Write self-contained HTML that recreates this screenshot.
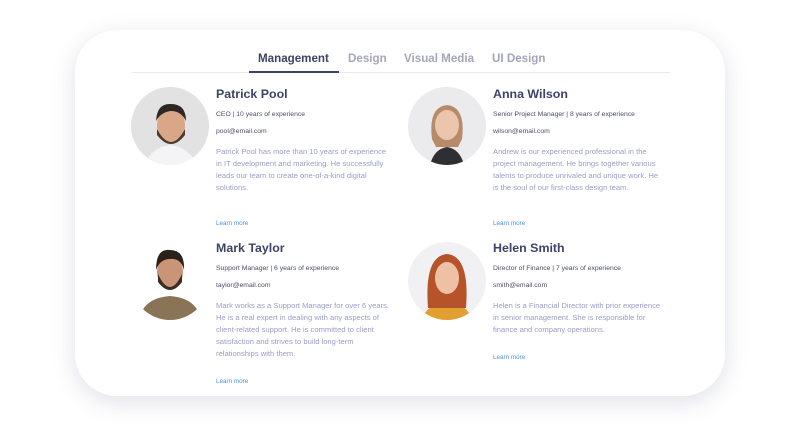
<!DOCTYPE html>
<html><head><meta charset="utf-8"><style>
*{margin:0;padding:0;box-sizing:border-box}
body{width:800px;height:428px;background:#fff;font-family:"Liberation Sans",sans-serif;position:relative;overflow:hidden}
.card{position:absolute;left:75px;top:30px;width:650px;height:366px;border-radius:42px;background:#fff;box-shadow:0 6px 24px rgba(60,70,110,.16)}
.tab{position:absolute;top:52px;font-size:11.6px;font-weight:bold;color:#a3a6bb;white-space:nowrap}
.a{position:absolute;border-radius:50%;overflow:hidden;width:78px;height:78px}
.n{position:absolute;font-size:12.4px;font-weight:bold;color:#3d4366;white-space:nowrap}
.r{position:absolute;font-size:6.8px;color:#4a4e63;white-space:nowrap}
.d{position:absolute;font-size:7.6px;line-height:12px;color:#9a9dc8;white-space:nowrap}
.l{position:absolute;font-size:6.3px;color:#4a90e2}
</style></head><body>
<div class="card"></div>
<div class="tab" style="left:258px;color:#3d4366">Management</div>
<div class="tab" style="left:348px">Design</div>
<div class="tab" style="left:404px">Visual Media</div>
<div class="tab" style="left:492px">UI Design</div>
<div style="position:absolute;left:132px;top:72px;width:538px;height:1px;background:#e6e7ef"></div>
<div style="position:absolute;left:249px;top:71px;width:90px;height:2px;background:#3d4366"></div>

<div class="a" style="left:131px;top:87px"><svg width="78" height="78"><rect width="78" height="78" fill="#e2e2e2"/><path d="M14 78 Q20 60 39 58 Q58 60 66 78Z" fill="#f4f4f6"/><ellipse cx="40" cy="38" rx="14" ry="17" fill="#d9a788"/><path d="M26 42 Q40 68 54 42 L54 48 Q40 66 26 48Z" fill="#4a3a30"/><path d="M25 34 Q26 16 40 17 Q55 17 55 34 Q50 24 40 24 Q30 25 25 34Z" fill="#2e2824"/></svg></div>
<div class="a" style="left:408px;top:87px"><svg width="78" height="78"><rect width="78" height="78" fill="#ebebed"/><path d="M22 78 Q26 62 39 60 Q52 62 56 78Z" fill="#2f2f33"/><path d="M24 52 Q20 20 39 18 Q58 20 54 52 L50 60 L28 60Z" fill="#b78b6a"/><ellipse cx="39" cy="38" rx="12" ry="15" fill="#ecc5ad"/></svg></div>
<div class="a" style="left:131px;top:242px"><svg width="78" height="78"><rect width="78" height="78" fill="#fff"/><path d="M8 78 Q12 56 39 54 Q66 56 70 78Z" fill="#8a7457"/><ellipse cx="39" cy="30" rx="13" ry="16" fill="#c99576"/><path d="M27 32 Q39 58 51 32 L51 40 Q39 56 27 40Z" fill="#3a2c24"/><path d="M25 28 Q25 6 39 8 Q54 8 53 28 Q50 16 39 17 Q29 17 25 28Z" fill="#2a211d"/></svg></div>
<div class="a" style="left:408px;top:242px"><svg width="78" height="78"><rect width="78" height="78" fill="#f1f1f3"/><path d="M14 78 Q18 62 39 60 Q60 62 64 78Z" fill="#e3a032"/><path d="M20 66 Q16 14 39 12 Q62 14 58 66 L50 66 L28 66Z" fill="#b5532a"/><ellipse cx="39" cy="36" rx="12" ry="16" fill="#eec1a5"/></svg></div>

<div class="n" style="left:216px;top:87px">Patrick Pool</div>
<div class="r" style="left:216px;top:111px">CEO | 10 years of experience</div>
<div class="r" style="left:216px;top:128px">pool@email.com</div>
<div class="d" style="left:216px;top:146px">Patrick Pool has more than 10 years of experience<br>in IT development and marketing. He successfully<br>leads our team to create one-of-a-kind digital<br>solutions.</div>
<div class="l" style="left:216px;top:220px">Learn more</div>

<div class="n" style="left:493px;top:87px">Anna Wilson</div>
<div class="r" style="left:493px;top:111px">Senior Project Manager | 8 years of experience</div>
<div class="r" style="left:493px;top:128px">wilson@email.com</div>
<div class="d" style="left:493px;top:146px">Andrew is our experienced professional in the<br>project management. He brings together various<br>talents to produce unrivaled and unique work. He<br>is the soul of our first-class design team.</div>
<div class="l" style="left:493px;top:220px">Learn more</div>

<div class="n" style="left:216px;top:241px">Mark Taylor</div>
<div class="r" style="left:216px;top:265px">Support Manager | 6 years of experience</div>
<div class="r" style="left:216px;top:282px">taylor@email.com</div>
<div class="d" style="left:216px;top:300px">Mark works as a Support Manager for over 6 years.<br>He is a real expert in dealing with any aspects of<br>client-related support. He is committed to client<br>satisfaction and strives to build long-term<br>relationships with them.</div>
<div class="l" style="left:216px;top:378px">Learn more</div>

<div class="n" style="left:493px;top:241px">Helen Smith</div>
<div class="r" style="left:493px;top:265px">Director of Finance | 7 years of experience</div>
<div class="r" style="left:493px;top:282px">smith@email.com</div>
<div class="d" style="left:493px;top:300px">Helen is a Financial Director with prior experience<br>in senior management. She is responsible for<br>finance and company operations.</div>
<div class="l" style="left:493px;top:354px">Learn more</div>
</body></html>
